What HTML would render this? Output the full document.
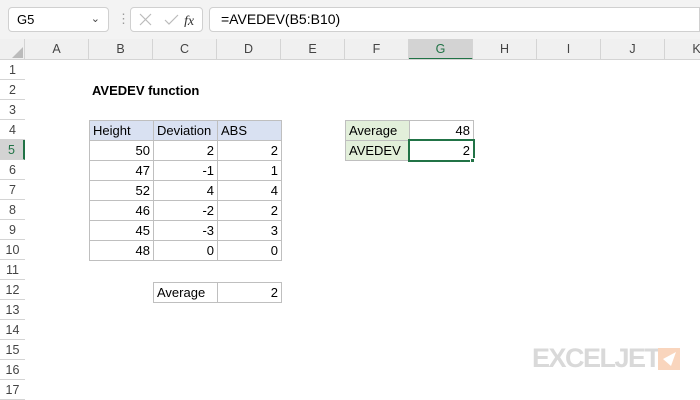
<!DOCTYPE html>
<html><head><style>
*{margin:0;padding:0;box-sizing:border-box}
body{width:700px;height:400px;background:#fff;font-family:"Liberation Sans",Arial,sans-serif;position:relative;overflow:hidden;font-size:13px;color:#000}
.a{position:absolute}
.ch{position:absolute;top:39px;height:21px;border-right:1px solid #d4d4d4;text-align:center;line-height:21px;color:#444;font-size:12.5px;background:#f0f0f0}
.rh{position:absolute;left:0;width:25px;height:20px;border-bottom:1px solid #d4d4d4;text-align:center;line-height:20px;color:#444;font-size:12.5px;background:#fff}
.c{position:absolute;height:21px;border:1px solid #bfbfbf;line-height:19px;padding:0 3px;font-size:13px}
.r{text-align:right}
</style></head><body>
<div class="a" style="left:0;top:0;width:700px;height:39px;background:#f3f3f3"></div>
<div class="a" style="left:8px;top:7px;width:101px;height:25px;background:#fff;border:1px solid #d0d0d0;border-radius:4px;padding-left:8px;line-height:23px;font-size:13px">G5<span style="position:absolute;right:8px;top:0;font-size:11px;color:#444">&#8964;</span></div>
<div class="a" style="left:117px;top:11px;color:#999;font-size:13px">&#8942;</div>
<div class="a" style="left:130px;top:7px;width:73px;height:25px;background:#fff;border:1px solid #d0d0d0;border-radius:4px"></div>
<svg class="a" style="left:138px;top:13px" width="60" height="14"><path d="M2 1L13 12M13 1L2 12" stroke="#bbb" stroke-width="1.2"/><path d="M27 7L31 11L40 2" stroke="#bbb" stroke-width="1.2" fill="none"/><text x="46" y="12" font-family="Liberation Serif" font-style="italic" font-size="14" fill="#333">fx</text></svg>
<div class="a" style="left:209px;top:7px;width:491px;height:25px;background:#fff;border:1px solid #d0d0d0;border-radius:4px 0 0 4px;padding-left:11px;line-height:23px;font-size:14px">=AVEDEV(B5:B10)</div>
<div class="a" style="left:0;top:39px;width:25px;height:21px;background:#f0f0f0;border-right:1px solid #d4d4d4"></div>
<svg class="a" style="left:12px;top:47px" width="12" height="12"><path d="M11 0L11 11L0 11Z" fill="#bbb"/></svg>
<div class="ch" style="left:25px;width:64px">A</div>
<div class="ch" style="left:89px;width:64px">B</div>
<div class="ch" style="left:153px;width:64px">C</div>
<div class="ch" style="left:217px;width:64px">D</div>
<div class="ch" style="left:281px;width:64px">E</div>
<div class="ch" style="left:345px;width:64px">F</div>
<div class="ch" style="left:409px;width:64px;background:#d3d3d3;border-bottom:2px solid #217346;color:#217346">G</div>
<div class="ch" style="left:473px;width:64px">H</div>
<div class="ch" style="left:537px;width:64px">I</div>
<div class="ch" style="left:601px;width:64px">J</div>
<div class="ch" style="left:665px;width:64px">K</div>
<div class="a" style="left:0;top:59px;width:700px;height:1px;background:#d4d4d4"></div>
<div class="a" style="left:24px;top:60px;width:1px;height:340px;background:#d4d4d4"></div>
<div class="rh" style="top:60px">1</div><div class="rh" style="top:80px">2</div><div class="rh" style="top:100px">3</div><div class="rh" style="top:120px">4</div>
<div class="rh" style="top:140px;background:#d3d3d3;color:#217346;border-right:2px solid #217346">5</div>
<div class="rh" style="top:160px">6</div><div class="rh" style="top:180px">7</div><div class="rh" style="top:200px">8</div><div class="rh" style="top:220px">9</div><div class="rh" style="top:240px">10</div><div class="rh" style="top:260px">11</div><div class="rh" style="top:280px">12</div><div class="rh" style="top:300px">13</div><div class="rh" style="top:320px">14</div><div class="rh" style="top:340px">15</div><div class="rh" style="top:360px">16</div><div class="rh" style="top:380px">17</div>
<div class="a" style="left:92px;top:83px;font-weight:bold;font-size:13px">AVEDEV function</div>
<div class="c" style="left:89px;top:120px;width:65px;background:#d9e1f2">Height</div>
<div class="c" style="left:153px;top:120px;width:65px;background:#d9e1f2">Deviation</div>
<div class="c" style="left:217px;top:120px;width:65px;background:#d9e1f2">ABS</div>
<div class="c r" style="left:89px;top:140px;width:65px">50</div><div class="c r" style="left:153px;top:140px;width:65px">2</div><div class="c r" style="left:217px;top:140px;width:65px">2</div>
<div class="c r" style="left:89px;top:160px;width:65px">47</div><div class="c r" style="left:153px;top:160px;width:65px">-1</div><div class="c r" style="left:217px;top:160px;width:65px">1</div>
<div class="c r" style="left:89px;top:180px;width:65px">52</div><div class="c r" style="left:153px;top:180px;width:65px">4</div><div class="c r" style="left:217px;top:180px;width:65px">4</div>
<div class="c r" style="left:89px;top:200px;width:65px">46</div><div class="c r" style="left:153px;top:200px;width:65px">-2</div><div class="c r" style="left:217px;top:200px;width:65px">2</div>
<div class="c r" style="left:89px;top:220px;width:65px">45</div><div class="c r" style="left:153px;top:220px;width:65px">-3</div><div class="c r" style="left:217px;top:220px;width:65px">3</div>
<div class="c r" style="left:89px;top:240px;width:65px">48</div><div class="c r" style="left:153px;top:240px;width:65px">0</div><div class="c r" style="left:217px;top:240px;width:65px">0</div>
<div class="c" style="left:153px;top:282px;width:65px">Average</div><div class="c r" style="left:217px;top:282px;width:65px">2</div>
<div class="c" style="left:345px;top:120px;width:65px;background:#e2efda">Average</div><div class="c r" style="left:409px;top:120px;width:65px">48</div>
<div class="c" style="left:345px;top:140px;width:65px;background:#e2efda">AVEDEV</div>
<div class="c r" style="left:408px;top:139px;width:67px;height:23px;border:2px solid #217346;line-height:19px">2</div>
<div class="a" style="left:470px;top:158px;width:5px;height:5px;background:#217346;border:1px solid #fff"></div>
<div class="a" style="left:532px;top:343px;font-size:27px;font-weight:bold;color:#d9d9d9;letter-spacing:-1.5px">EXCELJET</div>
<div class="a" style="left:658px;top:348px;width:22px;height:22px;background:#f9d5bd"></div>
<svg class="a" style="left:658px;top:348px" width="22" height="22"><path d="M5 11L18 4L13 18Z" fill="#fff"/></svg>
</body></html>
